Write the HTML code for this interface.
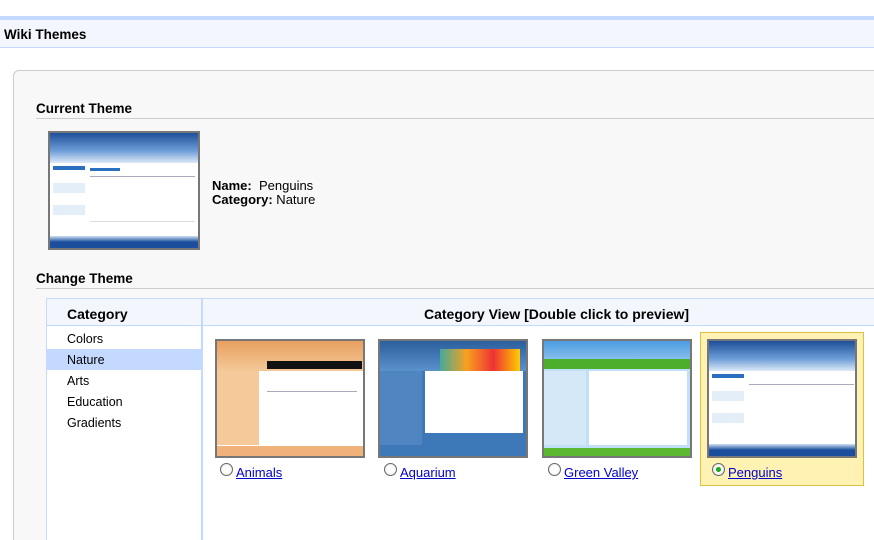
<!DOCTYPE html>
<html style="width:874px;height:540px;overflow:hidden"><head><meta charset="utf-8"><style>
*{margin:0;padding:0;box-sizing:border-box}
body{width:874px;height:540px;overflow:hidden;background:#fff;font-family:"Liberation Sans",sans-serif;color:#000;position:relative}
.abs{position:absolute}
.b{font-weight:bold}
.hdr{left:0;top:16px;width:874px;height:32px;background:#f3f7fd;border-top:4px solid #c3d9ff;border-bottom:1px solid #c3d9ff}
.panel{left:13px;top:70px;width:861px;height:470px;background:#f8f8f8;border:1px solid #ccc;border-right:none;border-bottom:none;border-radius:6px 0 0 0}
.h2{font-size:13.5px;font-weight:bold}
.rule{height:1px;background:#ccc}
.thumb{position:absolute;width:150px;height:119px;border:2px solid #777;overflow:hidden;background:#fff}
.thumb .side{position:absolute;left:0;top:26%;width:29%;bottom:10%}
.thumb .main{position:absolute;left:31%;top:26%;right:2%;bottom:10%;background:#fff}
.thumb .ln{position:absolute;height:1px;background:#aab}
.lbl{position:absolute;font-size:13px;color:#00c;text-decoration:underline}
.radio{position:absolute;width:13px;height:13px;border-radius:50%;border:1px solid #666;background:radial-gradient(circle,#fff 40%,#ddd)}
.cat{position:absolute;left:67px;font-size:12.5px}
</style></head><body>
<div class="abs hdr"></div>
<div class="abs b" style="left:4px;top:27px;font-size:13.5px">Wiki Themes</div>
<div class="abs panel"></div>
<div class="abs h2" style="left:36px;top:101px">Current Theme</div>
<div class="abs rule" style="left:36px;top:118px;width:838px"></div>

<div class="thumb" style="left:48px;top:131px;width:152px;height:119px">
 <div class="abs" style="left:0;top:0;width:100%;height:30px;background:linear-gradient(#1e4f9a,#6f9fd8 60%,#dce9f7)"></div>
 <div class="abs" style="left:0;bottom:0;width:100%;height:12px;background:linear-gradient(#cfe0f3,#1b4f9e 50%)"></div>
 <div class="abs" style="left:3px;top:33px;width:32px;height:4px;background:#2a6fc0"></div>
 <div class="abs" style="left:3px;top:50px;width:32px;height:10px;background:#e4eef9"></div>
 <div class="abs" style="left:3px;top:72px;width:32px;height:10px;background:#e4eef9"></div>
 <div class="abs" style="left:40px;top:35px;width:30px;height:3px;background:#2a6fc0"></div>
 <div class="ln" style="left:40px;top:43px;width:105px"></div>
 <div class="ln" style="left:40px;top:88px;width:105px;background:#ddd"></div>
</div>
<div class="abs" style="left:212px;top:179px;font-size:13px;line-height:14px"><b>Name:</b>&nbsp; Penguins<br><b>Category:</b> Nature</div>

<div class="abs h2" style="left:36px;top:271px">Change Theme</div>
<div class="abs rule" style="left:36px;top:288px;width:838px"></div>

<div class="abs" style="left:46px;top:298px;width:828px;height:242px;background:#fff;border:1px solid #c3d9ff;border-right:none;border-bottom:none"></div>
<div class="abs" style="left:47px;top:299px;width:827px;height:27px;background:#f3f7fd;border-bottom:1px solid #c3d9ff"></div>
<div class="abs" style="left:201px;top:298px;width:2px;height:242px;background:#c3d9ff"></div>
<div class="abs b" style="left:67px;top:306px;font-size:14px">Category</div>
<div class="abs b" style="left:424px;top:306px;font-size:14px">Category View [Double click to preview]</div>
<div class="abs" style="left:47px;top:349px;width:154px;height:21px;background:#c3d9ff"></div>
<div class="cat" style="top:332px">Colors</div>
<div class="cat" style="top:353px">Nature</div>
<div class="cat" style="top:374px">Arts</div>
<div class="cat" style="top:395px">Education</div>
<div class="cat" style="top:416px">Gradients</div>

<div class="abs" style="left:700px;top:332px;width:164px;height:154px;background:#fff2b3;border:1px solid #e0c040"></div>

<div class="thumb" style="left:215px;top:339px">
 <div class="abs" style="left:0;top:0;width:100%;height:30px;background:linear-gradient(#e8a060,#f4c898)"></div>
 <div class="abs" style="left:50px;top:10px;width:95px;height:18px;background:linear-gradient(transparent 55%,#111 55%)"></div>
 <div class="side" style="background:#f6c99b"></div>
 <div class="main"></div>
 <div class="abs" style="left:0;bottom:0;width:100%;height:10px;background:#f0b27a"></div>
 <div class="ln" style="left:50px;top:50px;width:90px"></div>
</div>
<div class="radio" style="left:220px;top:463px"></div>
<div class="lbl" style="left:236px;top:465px">Animals</div>

<div class="thumb" style="left:378px;top:339px;background:#3d78b8">
 <div class="abs" style="left:0;top:0;width:100%;height:30px;background:linear-gradient(#2b5f9e,#5a92cc)"></div>
 <div class="abs" style="left:60px;top:8px;width:80px;height:22px;background:linear-gradient(90deg,#4a9,#f8a020,#e33,#fc0)"></div>
 <div class="side" style="background:#4f86c2"></div>
 <div class="main" style="bottom:20%"></div>
</div>
<div class="radio" style="left:384px;top:463px"></div>
<div class="lbl" style="left:400px;top:465px">Aquarium</div>

<div class="thumb" style="left:542px;top:339px;background:#bfe0f7">
 <div class="abs" style="left:0;top:0;width:100%;height:28px;background:linear-gradient(#4a9be0,#a8d4f4)"></div>
 <div class="abs" style="left:0;top:18px;width:100%;height:10px;background:#4cae2c"></div>
 <div class="side" style="background:#d5e8f7"></div>
 <div class="main"></div>
 <div class="abs" style="left:0;bottom:0;width:100%;height:8px;background:#5cb830"></div>
</div>
<div class="radio" style="left:548px;top:463px"></div>
<div class="lbl" style="left:564px;top:465px">Green Valley</div>

<div class="thumb" style="left:707px;top:339px">
 <div class="abs" style="left:0;top:0;width:100%;height:30px;background:linear-gradient(#1e4f9a,#6f9fd8 60%,#dce9f7)"></div>
 <div class="abs" style="left:0;bottom:0;width:100%;height:12px;background:linear-gradient(#cfe0f3,#1b4f9e 50%)"></div>
 <div class="abs" style="left:3px;top:33px;width:32px;height:4px;background:#2a6fc0"></div>
 <div class="abs" style="left:3px;top:50px;width:32px;height:10px;background:#e4eef9"></div>
 <div class="abs" style="left:3px;top:72px;width:32px;height:10px;background:#e4eef9"></div>
 <div class="ln" style="left:40px;top:43px;width:105px"></div>
</div>
<div class="radio" style="left:712px;top:463px;background:radial-gradient(circle,#2a2 30%,#fff 35%,#ddd)"></div>
<div class="lbl" style="left:728px;top:465px">Penguins</div>
</body></html>
